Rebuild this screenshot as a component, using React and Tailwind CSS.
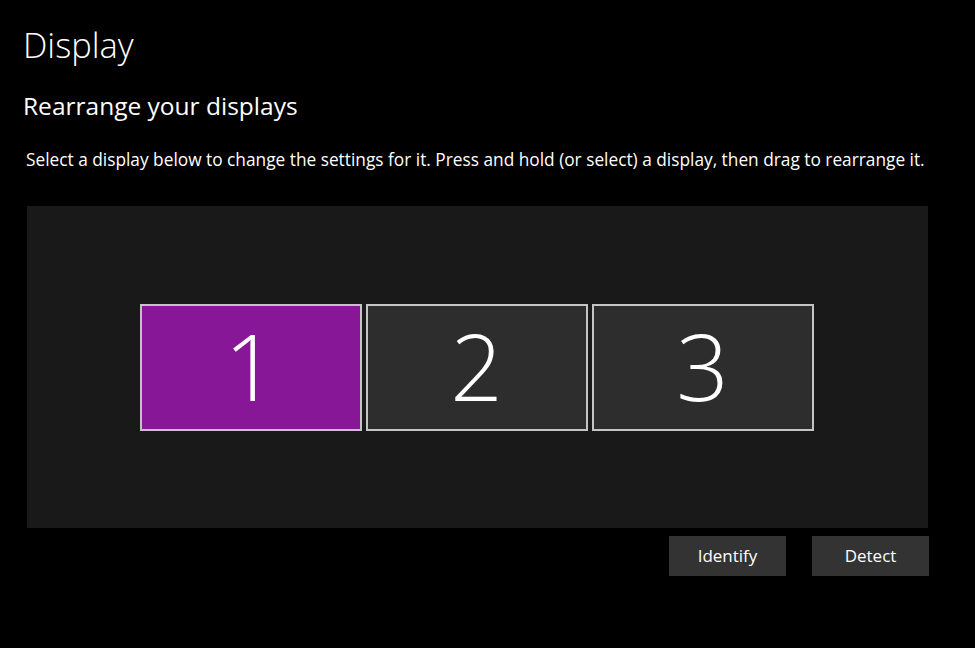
import React from 'react';

const screens = [
    { id: 1, active: true },
    { id: 2, active: false },
    { id: 3, active: false },
];

export default function App() {
    return (
        <div
            className="w-[975px] h-[648px] bg-black text-white overflow-hidden"
            style={{ fontFamily: '"Open Sans", "Noto Sans", sans-serif' }}
        >
            <div className="pl-[23px] pt-[22px]">
                <h1 className="text-[34.5px] leading-[46px] font-light">Display</h1>
                <h2 className="mt-[22px] text-[24.5px] leading-[32px] font-normal">Rearrange your displays</h2>
                <p className="mt-[26px] ml-[3px] text-[17.3px] leading-[24px]">
                    Select a display below to change the settings for it. Press and hold (or select) a display, then drag to rearrange it.
                </p>
            </div>

            <div className="ml-[27px] mt-[34px] w-[901px] h-[322px] bg-[#191919] flex items-center justify-center">
                <div className="flex gap-[4px] -ml-[2px]">
                    {screens.map((s) => (
                        <div
                            key={s.id}
                            className={
                                s.active
                                    ? 'w-[222px] h-[127px] border-2 border-[#c4c4c4] bg-[#881798] flex items-center justify-center'
                                    : 'w-[222px] h-[127px] border-2 border-[#c4c4c4] bg-[#2d2d2d] flex items-center justify-center'
                            }
                        >
                            <span className="text-[92px] leading-none font-light -mt-[3px]">{s.id}</span>
                        </div>
                    ))}
                </div>
            </div>

            <div className="flex justify-end gap-[26px] w-[929px] mt-[8px]">
                <button className="w-[117px] h-[40px] bg-[#333333] text-[17px] font-medium text-white">Identify</button>
                <button className="w-[117px] h-[40px] bg-[#333333] text-[17px] font-medium text-white">Detect</button>
            </div>
        </div>
    );
}
